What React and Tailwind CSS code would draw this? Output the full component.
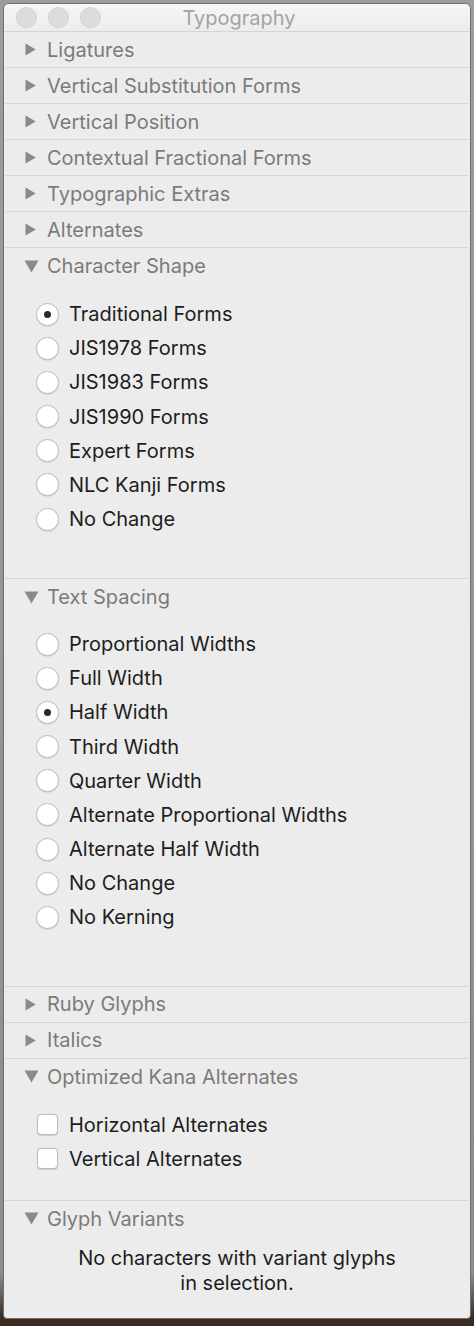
import React from "react";

const font = { fontFamily: "Inter, 'Noto Sans', 'Liberation Sans', sans-serif" };

function Closed({ label }) {
  return (
    <div className="h-[36px] flex items-center border-b border-[#d6d6d6] pl-[20px]">
      <svg width="11" height="13" viewBox="0 0 11 13" className="mr-[11px]">
        <path d="M0.5 0.5 L10.8 6.5 L0.5 12.5 Z" fill="#8a8a8a" />
      </svg>
      <span className="text-[20px] text-[#7b7b7b]">{label}</span>
    </div>
  );
}

function OpenHeader({ label }) {
  return (
    <div className="h-[36px] flex items-center pl-[19px]">
      <svg width="15" height="13" viewBox="0 0 15 13" className="mr-[8px]">
        <path d="M0.5 0.5 L14.5 0.5 L7.5 12.5 Z" fill="#8a8a8a" />
      </svg>
      <span className="text-[20px] text-[#7b7b7b]">{label}</span>
    </div>
  );
}

function Radio({ label, on }) {
  return (
    <div className="h-[34.17px] flex items-center pl-[31px]">
      <div className="w-[23px] h-[23px] rounded-full bg-white border border-[#bdbdbd] shadow-[0_0.5px_1px_rgba(0,0,0,0.15)] flex items-center justify-center mr-[10px]">
        {on && <div className="w-[7px] h-[7px] rounded-full bg-[#2a2a2a]" />}
      </div>
      <span className="text-[20px] text-[#1d1d1d]">{label}</span>
    </div>
  );
}

function Check({ label }) {
  return (
    <div className="h-[34px] flex items-center pl-[32px]">
      <div className="w-[21px] h-[21px] rounded-[4px] bg-white border border-[#bdbdbd] shadow-[0_0.5px_1px_rgba(0,0,0,0.15)] mr-[11px]" />
      <span className="text-[20px] text-[#1d1d1d]">{label}</span>
    </div>
  );
}

export default function App() {
  return (
    <div className="w-[474px] h-[1326px] bg-[linear-gradient(#9c9c9c_0%,#8e8e8e_96%,#3a2a1f_99.4%)] pt-[3px] px-[3px]" style={font}>
      <div className="h-[1316px] bg-[#ececec] border border-[#6e6e6e] rounded-t-[6px] rounded-b-[4px] overflow-hidden flex flex-col">
        <div className="h-[28px] relative bg-[linear-gradient(#f6f6f6,#ececec)] border-b border-[#d4d4d4] flex items-center">
          <div className="flex gap-[11px] pl-[12px]">
            <div className="w-[21px] h-[21px] rounded-full bg-[#dcdcdc] border border-[#d0d0d0]" />
            <div className="w-[21px] h-[21px] rounded-full bg-[#dcdcdc] border border-[#d0d0d0]" />
            <div className="w-[21px] h-[21px] rounded-full bg-[#dcdcdc] border border-[#d0d0d0]" />
          </div>
          <div className="absolute inset-0 flex items-center justify-center text-[20px] text-[#a3a3a3] pl-[4px]">Typography</div>
        </div>
        <div className="mx-[1px] flex flex-col">
          <Closed label="Ligatures" />
          <Closed label="Vertical Substitution Forms" />
          <Closed label="Vertical Position" />
          <Closed label="Contextual Fractional Forms" />
          <Closed label="Typographic Extras" />
          <Closed label="Alternates" />
          <div className="border-b border-[#d6d6d6] pb-[42px]">
            <OpenHeader label="Character Shape" />
            <div className="pt-[13px]">
              <Radio label="Traditional Forms" on />
              <Radio label="JIS1978 Forms" />
              <Radio label="JIS1983 Forms" />
              <Radio label="JIS1990 Forms" />
              <Radio label="Expert Forms" />
              <Radio label="NLC Kanji Forms" />
              <Radio label="No Change" />
            </div>
          </div>
          <div className="border-b border-[#d6d6d6] pb-[51px]">
            <OpenHeader label="Text Spacing" />
            <div className="pt-[12px]">
              <Radio label="Proportional Widths" />
              <Radio label="Full Width" />
              <Radio label="Half Width" on />
              <Radio label="Third Width" />
              <Radio label="Quarter Width" />
              <Radio label="Alternate Proportional Widths" />
              <Radio label="Alternate Half Width" />
              <Radio label="No Change" />
              <Radio label="No Kerning" />
            </div>
          </div>
          <Closed label="Ruby Glyphs" />
          <Closed label="Italics" />
          <div className="border-b border-[#d6d6d6] pb-[24px]">
            <OpenHeader label="Optimized Kana Alternates" />
            <div className="pt-[13px]">
              <Check label="Horizontal Alternates" />
              <Check label="Vertical Alternates" />
            </div>
          </div>
          <div>
            <OpenHeader label="Glyph Variants" />
            <div className="pt-[9px] text-center text-[20px] leading-[25px] text-[#1d1d1d]">
              No characters with variant glyphs
              <br />
              in selection.
            </div>
          </div>
        </div>
      </div>
    </div>
  );
}
